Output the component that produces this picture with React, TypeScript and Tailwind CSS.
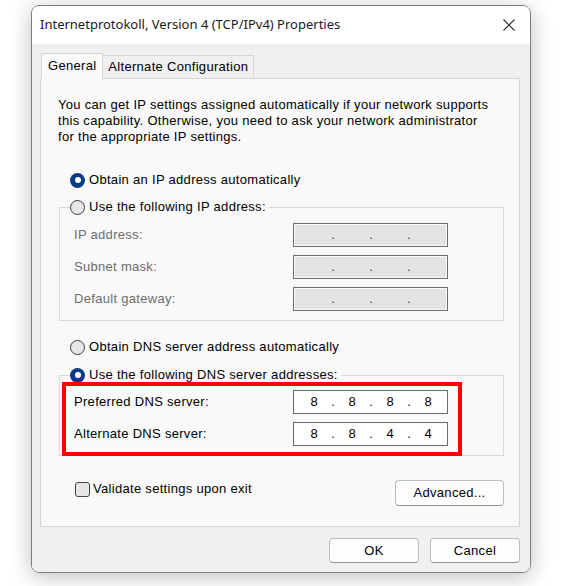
import type { ReactNode } from "react";

function Radio({ checked = false }: { checked?: boolean }) {
  if (checked) {
    return (
      <span className="flex h-[15px] w-[15px] shrink-0 items-center justify-center rounded-full bg-[#0b3a86]">
        <span className="h-[6px] w-[6px] rounded-full bg-white" />
      </span>
    );
  }
  return <span className="h-[15px] w-[15px] shrink-0 rounded-full border border-[#3c3c3c] bg-[#e6e6e6]" />;
}

function RadioLabel({ checked = false, children }: { checked?: boolean; children: ReactNode }) {
  return (
    <span className="flex h-4 items-center gap-[4px] text-black">
      <Radio checked={checked} />
      <span>{children}</span>
    </span>
  );
}

function IpBox({ parts, disabled = false }: { parts?: string[]; disabled?: boolean }) {
  const segs = parts ?? ["", "", "", ""];
  return (
    <div
      className={
        "flex h-6 w-[155px] items-center pl-[1px] border shadow-[inset_0_0_0_1px_#fbfbfb] tracking-normal " +
        (disabled ? "border-[#6c6c6c] bg-[#e4e4e4] text-[#333]" : "border-[#6c6c6c] bg-white text-black")
      }
    >
      {segs.map((s, i) => (
        <div key={i} className="flex items-center">
          {i > 0 && <span className="flex w-0 justify-center">.</span>}
          <span className="flex w-[38px] justify-center">{s}</span>
        </div>
      ))}
    </div>
  );
}

function Button({ children, className = "" }: { children: ReactNode; className?: string }) {
  return (
    <div
      className={
        "flex items-center justify-center rounded-[4px] border border-[#bdbdbd] border-b-[#939393] bg-[#fdfdfd] text-black " +
        className
      }
    >
      {children}
    </div>
  );
}

export default function App() {
  return (
    <div className="h-[586px] w-[562px] bg-white pl-[31px] pt-[5px] font-['Liberation_Sans',Arial,sans-serif] text-[13px] tracking-[0.3px]">
      <div className="flex h-[568px] w-[500px] flex-col overflow-hidden rounded-lg border border-[#7c7c7c] shadow-[0_4px_22px_rgba(0,0,0,0.25)]">
        <div className="flex h-[38px] shrink-0 items-center justify-between bg-white pl-2 pr-[15px]">
          <span className="font-['Noto_Sans',sans-serif] text-[13px] tracking-normal text-[#1b1b1b]">
            Internetprotokoll, Version 4 (TCP/IPv4) Properties
          </span>
          <svg width="12" height="12" viewBox="0 0 12 12" fill="none" stroke="#2b2b2b" strokeWidth="1.1">
            <path d="M0.5 0.5 11.5 11.5M11.5 0.5 0.5 11.5" />
          </svg>
        </div>

        <div className="flex flex-1 flex-col bg-[#f0f0f0] px-2 pt-[9px]">
          <div className="flex items-end pl-px">
            <div className="relative z-10 -mb-px flex h-[26px] items-center border border-b-0 border-[#d6d6d6] bg-[#f9f9f9] px-[6px] pb-[2px] text-black">
              General
            </div>
            <div className="flex h-[23px] items-center border border-b-0 border-l-0 border-[#d6d6d6] bg-[#f0f0f0] px-[5px] text-black">
              Alternate Configuration
            </div>
          </div>

          <div className="flex h-[449px] w-[480px] flex-col border border-[#d6d6d6] bg-[#f9f9f9] pl-[18px] pr-[14px] pt-[18px]">
            <p className="-ml-px leading-4 text-black">
              You can get IP settings assigned automatically if your network supports
              <br />
              this capability. Otherwise, you need to ask your network administrator
              <br />
              for the appropriate IP settings.
            </p>

            <div className="ml-[11px] mt-[27px]">
              <RadioLabel checked>Obtain an IP address automatically</RadioLabel>
            </div>

            <fieldset className="mt-[11px] w-[445px] border border-[#d9d9d9] pb-[9px]">
              <legend className="ml-[10px] pr-[3px]">
                <RadioLabel>Use the following IP address:</RadioLabel>
              </legend>
              <div className="mt-[8px] grid grid-cols-[219px_155px] items-center gap-y-2 pl-[14px] text-[#6d6d6d]">
                <span>IP address:</span>
                <IpBox disabled />
                <span>Subnet mask:</span>
                <IpBox disabled />
                <span>Default gateway:</span>
                <IpBox disabled />
              </div>
            </fieldset>

            <div className="ml-[11px] mt-[18px]">
              <RadioLabel>Obtain DNS server address automatically</RadioLabel>
            </div>

            <fieldset className="mt-[12px] w-[445px] border border-[#d9d9d9]">
              <legend className="ml-[10px] pr-[3px]">
                <RadioLabel checked>Use the following DNS server addresses:</RadioLabel>
              </legend>
              <div className="relative z-10 -mb-px -mt-px ml-[2px] grid w-[400px] grid-cols-[219px_155px] items-center gap-y-2 border-4 border-[#ff0000] pb-[6px] pl-2 pt-[4px] text-black">
                <span>Preferred DNS server:</span>
                <IpBox parts={["8", "8", "8", "8"]} />
                <span>Alternate DNS server:</span>
                <IpBox parts={["8", "8", "4", "4"]} />
              </div>
            </fieldset>

            <div className="mt-[25px] flex items-start justify-between pr-px">
              <span className="ml-[16px] flex h-4 items-center gap-[3px] text-black">
                <span className="h-[15px] w-[15px] rounded-[3px] border border-[#444] bg-[#e6e6e6]" />
                Validate settings upon exit
              </span>
              <Button className="-mt-px h-[26px] w-[109px]">Advanced...</Button>
            </div>
          </div>

          <div className="mt-[11px] flex justify-end gap-[11px] pr-[2px]">
            <Button className="h-[25px] w-[90px]">OK</Button>
            <Button className="h-[25px] w-[90px]">Cancel</Button>
          </div>
        </div>
      </div>
    </div>
  );
}
